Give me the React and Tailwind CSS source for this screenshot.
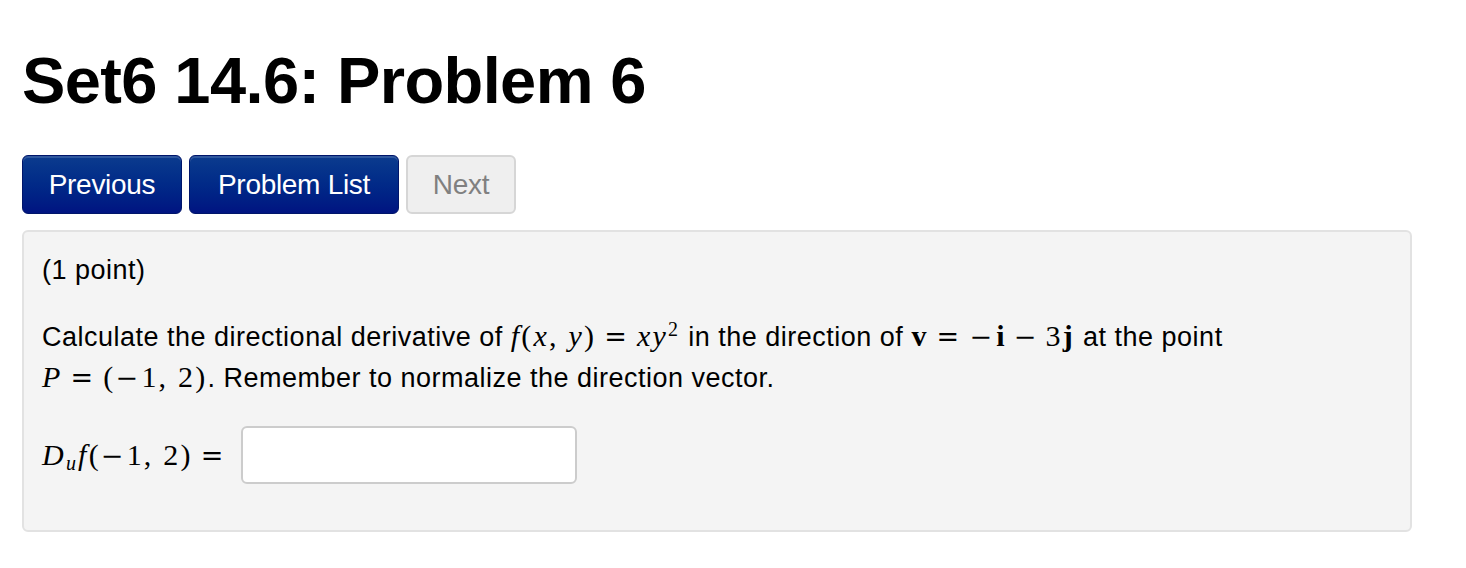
import { useState } from 'react';

const serif = { fontFamily: '"Liberation Serif", "DejaVu Serif", serif' };
const op = { fontFamily: '"DejaVu Serif", serif' };

function MI({ children }) {
  return <span className="italic">{children}</span>;
}

// relation / binary operator with TeX-like spacing
function Op({ children, space = 'mx-[8px]' }) {
  return (
    <span className={`${space} text-[27px] leading-none`} style={op}>
      {children}
    </span>
  );
}

function Math({ children }) {
  return (
    <span className="text-[30px] leading-none tracking-[2.2px]" style={serif}>
      {children}
    </span>
  );
}

function NavButton({ label, width, disabled }) {
  if (disabled) {
    return (
      <button
        disabled
        className={`${width} h-[59px] rounded-[6px] border-2 border-[#d6d6d6] bg-[#efefef] text-[28px] tracking-[-0.3px] text-[#808080]`}
      >
        {label}
      </button>
    );
  }
  return (
    <button
      className={`${width} h-[59px] rounded-[6px] border border-[#00156a] bg-gradient-to-b from-[#0c3b8e] to-[#001381] text-[28px] tracking-[-0.3px] text-white shadow-[inset_0_2px_0_rgba(255,255,255,0.15)]`}
    >
      {label}
    </button>
  );
}

export default function App() {
  const [answer, setAnswer] = useState('');

  return (
    <div
      className="min-h-[568px] bg-white pl-[22px] pr-[54px] text-black"
      style={{ fontFamily: '"Liberation Sans", Arial, sans-serif' }}
    >
      <h1 className="pt-[46px] text-[65px] font-bold leading-[70px] tracking-[-0.6px]">Set6 14.6: Problem 6</h1>

      <div className="mt-[39px] flex gap-[7px]">
        <NavButton label="Previous" width="w-[160px]" />
        <NavButton label="Problem List" width="w-[210px]" />
        <NavButton label="Next" width="w-[110px]" disabled />
      </div>

      <div className="mt-[16px] rounded-[6px] border-2 border-[#e2e2e2] bg-[#f4f4f4] px-[18px] pt-[18px] pb-[46px] text-[27px] leading-[41px] tracking-[0.5px]">
        <p>(1 point)</p>

        <p className="mt-[26px]">
          Calculate the directional derivative of{' '}
          <Math>
            <MI>f</MI>(<MI>x</MI>, <MI>y</MI>)<Op>=</Op>
            <MI>xy</MI>
            <sup className="text-[20px]">2</sup>
          </Math>{' '}
          in the direction of{' '}
          <Math>
            <b>v</b>
            <Op>=</Op>
            <Op space="mr-[2px]">−</Op>
            <b>i</b>
            <Op space="mx-[7px]">−</Op>3<b>j</b>
          </Math>{' '}
          at the point
          <br />
          <Math>
            <MI>P</MI>
            <Op>=</Op>(<Op space="mr-[1px]">−</Op>1, 2)
          </Math>
          . Remember to normalize the direction vector.
        </p>

        <div className="mt-[27px] flex items-center gap-[16px]">
          <Math>
            <MI>D</MI>
            <sub className="text-[20px] italic">u</sub>
            <MI>f</MI>(<Op space="mr-[1px]">−</Op>1, 2)<Op space="ml-[8px]">=</Op>
          </Math>
          <input
            value={answer}
            onChange={(e) => setAnswer(e.target.value)}
            className="h-[58px] w-[336px] rounded-[6px] border-2 border-[#cccccc] bg-white px-3 text-[26px] outline-none"
          />
        </div>
      </div>
    </div>
  );
}
